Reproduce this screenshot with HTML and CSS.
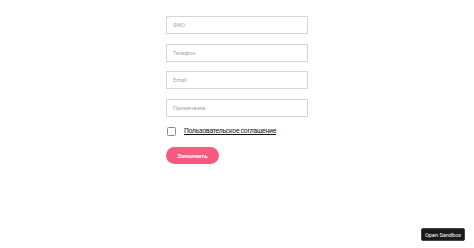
FILE: index.html
```html
<!DOCTYPE html>
<html>
  <head>
    <title>Form</title>
    <link rel="stylesheet" href="styles.css">
  </head>
  <body>
    <form class="form">
      <input class="field" type="text" placeholder="ФИО">
      <input class="field" type="text" placeholder="Телефон">
      <input class="field" type="text" placeholder="Email">
      <input class="field" type="text" placeholder="Примечание">
      <label class="agree">
        <span class="box"></span>
        <span class="agree-text">Пользовательское соглашение</span>
      </label>
      <button class="submit" type="button">Заполнить</button>
    </form>
    <a class="sandbox" href="#">Open Sandbox</a>
  </body>
</html>
```

FILE: styles.css
```css
body {
  margin: 0;
  background: #ffffff;
  font-family: Roboto, "Noto Sans", sans-serif;
}

.form {
  width: 142px;
  margin: 16px auto 0;
  display: flex;
  flex-direction: column;
}

.field {
  box-sizing: border-box;
  height: 18px;
  margin: 0 0 9.5px;
  padding: 0 6px;
  border: 1px solid #d6d6d6;
  border-radius: 0;
  font-family: inherit;
  font-size: 5.5px;
  color: #333;
  outline: none;
}

.field::placeholder {
  color: #a8a8a8;
}

.agree {
  display: flex;
  align-items: center;
  margin-top: 0.5px;
  cursor: pointer;
}

.box {
  box-sizing: border-box;
  width: 9px;
  height: 9px;
  margin-left: 1px;
  border: 1px solid #8a8a8a;
  border-radius: 1.5px;
}

.agree-text {
  margin-left: 8px;
  font-size: 6.8px;
  letter-spacing: -0.3px;
  color: #111;
  text-decoration: underline;
}

.submit {
  align-self: flex-start;
  margin-top: 11px;
  width: 53px;
  height: 17px;
  border: none;
  border-radius: 9px;
  background-color: #f45b7f;
  color: #ffffff;
  font-family: inherit;
  font-size: 6px;
  font-weight: bold;
  cursor: pointer;
}

.sandbox {
  position: fixed;
  right: 9px;
  bottom: 7px;
  box-sizing: border-box;
  width: 44px;
  height: 13px;
  display: flex;
  align-items: center;
  justify-content: center;
  border-radius: 2px;
  border: 1px solid #444;
  background: #1a1a1a;
  color: #ffffff;
  font-size: 5.6px;
  text-decoration: none;
}
```
